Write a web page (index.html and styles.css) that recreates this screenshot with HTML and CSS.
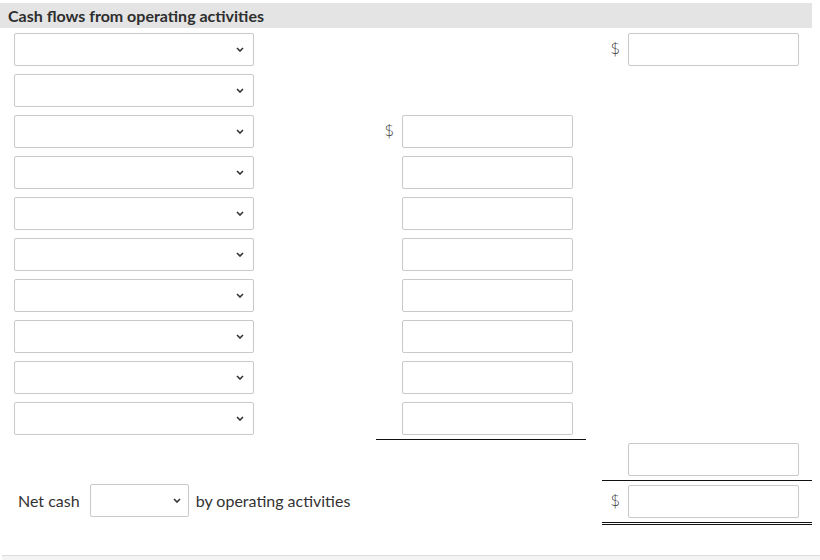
FILE: index.html
```html
<!DOCTYPE html>
<html>
<head>
<meta charset="utf-8">
<link rel="stylesheet" href="styles.css">
</head>
<body>
<div class="sheet">
  <div class="head">Cash flows from operating activities</div>
  <div class="rows">
    <div class="row">
      <div class="sel"><svg class="chev" width="8" height="5" viewBox="0 0 8 5"><path d="M1 1 L4 4 L7 1" fill="none" stroke="#333" stroke-width="1.6"/></svg></div>
      <div class="mid"></div>
      <div class="right"><span class="dol">$</span><div class="inp"></div></div>
    </div>
    <div class="row">
      <div class="sel"><svg class="chev" width="8" height="5" viewBox="0 0 8 5"><path d="M1 1 L4 4 L7 1" fill="none" stroke="#333" stroke-width="1.6"/></svg></div>
    </div>
    <div class="row">
      <div class="sel"><svg class="chev" width="8" height="5" viewBox="0 0 8 5"><path d="M1 1 L4 4 L7 1" fill="none" stroke="#333" stroke-width="1.6"/></svg></div>
      <div class="mid"><span class="dol">$</span><div class="inp"></div></div>
    </div>
    <div class="row">
      <div class="sel"><svg class="chev" width="8" height="5" viewBox="0 0 8 5"><path d="M1 1 L4 4 L7 1" fill="none" stroke="#333" stroke-width="1.6"/></svg></div>
      <div class="mid"><span class="dol"></span><div class="inp"></div></div>
    </div>
    <div class="row">
      <div class="sel"><svg class="chev" width="8" height="5" viewBox="0 0 8 5"><path d="M1 1 L4 4 L7 1" fill="none" stroke="#333" stroke-width="1.6"/></svg></div>
      <div class="mid"><span class="dol"></span><div class="inp"></div></div>
    </div>
    <div class="row">
      <div class="sel"><svg class="chev" width="8" height="5" viewBox="0 0 8 5"><path d="M1 1 L4 4 L7 1" fill="none" stroke="#333" stroke-width="1.6"/></svg></div>
      <div class="mid"><span class="dol"></span><div class="inp"></div></div>
    </div>
    <div class="row">
      <div class="sel"><svg class="chev" width="8" height="5" viewBox="0 0 8 5"><path d="M1 1 L4 4 L7 1" fill="none" stroke="#333" stroke-width="1.6"/></svg></div>
      <div class="mid"><span class="dol"></span><div class="inp"></div></div>
    </div>
    <div class="row">
      <div class="sel"><svg class="chev" width="8" height="5" viewBox="0 0 8 5"><path d="M1 1 L4 4 L7 1" fill="none" stroke="#333" stroke-width="1.6"/></svg></div>
      <div class="mid"><span class="dol"></span><div class="inp"></div></div>
    </div>
    <div class="row">
      <div class="sel"><svg class="chev" width="8" height="5" viewBox="0 0 8 5"><path d="M1 1 L4 4 L7 1" fill="none" stroke="#333" stroke-width="1.6"/></svg></div>
      <div class="mid"><span class="dol"></span><div class="inp"></div></div>
    </div>
    <div class="row row-last">
      <div class="sel"><svg class="chev" width="8" height="5" viewBox="0 0 8 5"><path d="M1 1 L4 4 L7 1" fill="none" stroke="#333" stroke-width="1.6"/></svg></div>
      <div class="mid underline"><span class="dol"></span><div class="inp"></div></div>
    </div>
    <div class="row row-sub">
      <div class="right underline"><span class="dol"></span><div class="inp"></div></div>
    </div>
    <div class="row row-net">
      <div class="netlabel">
        <span>Net cash</span>
        <div class="sel small"><svg class="chev" width="8" height="5" viewBox="0 0 8 5"><path d="M1 1 L4 4 L7 1" fill="none" stroke="#333" stroke-width="1.6"/></svg></div>
        <span>by operating activities</span>
      </div>
      <div class="right dbl"><span class="dol">$</span><div class="inp"></div></div>
    </div>
  </div>
  <div class="foot"></div>
</div>
</body>
</html>
```

FILE: styles.css
```css
html, body {
  margin: 0;
  padding: 0;
  background: #fff;
}
body {
  font-family: Lato, "Open Sans", sans-serif;
  color: #333;
  width: 820px;
  height: 560px;
  overflow: hidden;
}
.sheet {
  width: 812px;
  padding-top: 3px;
}
.head {
  height: 25px;
  background: #e4e4e4;
  font-weight: bold;
  font-size: 16px;
  line-height: 26px;
  padding-left: 8px;
  color: #2e2e2e;
}
.rows {
  display: flex;
  flex-direction: column;
  padding-top: 5px;
}
.row {
  display: grid;
  grid-template-columns: 14px 240px 122px 210px 16px 210px;
  height: 33px;
  margin-bottom: 8px;
}
.sel {
  grid-column: 2;
  box-sizing: border-box;
  height: 33px;
  border: 1px solid #c9c9c9;
  border-radius: 2px;
  background: #fff;
  display: flex;
  align-items: center;
  justify-content: flex-end;
  padding-right: 9px;
}
.mid {
  grid-column: 4;
  display: grid;
  grid-template-columns: 26px 171px 13px;
  align-items: start;
}
.right {
  grid-column: 6;
  display: grid;
  grid-template-columns: 26px 171px 13px;
  align-items: start;
}
.dol {
  font-family: "DejaVu Sans", sans-serif;
  font-weight: 200;
  font-size: 15px;
  color: #444;
  line-height: 33px;
  text-align: right;
  padding-right: 8px;
}
.inp {
  box-sizing: border-box;
  height: 33px;
  border: 1px solid #c9c9c9;
  border-radius: 2px;
  background: #fff;
}
.underline {
  padding-bottom: 4px;
  border-bottom: 1px solid #111;
}
.row-last {
  height: auto;
  margin-bottom: 3px;
}
.row-sub {
  height: auto;
  margin-bottom: 4px;
}
.row-net {
  height: auto;
  margin-bottom: 0;
}
.dbl {
  padding-bottom: 4px;
  border-bottom: 3px double #111;
}
.netlabel {
  grid-column: 1 / 4;
  display: flex;
  align-items: center;
  height: 33px;
  padding-left: 18px;
  margin-top: -1px;
  font-size: 16px;
  color: #333;
}
.sel.small {
  width: 99px;
  margin: 0 7px 0 10px;
  padding-right: 7px;
}
.foot {
  margin-top: 30px;
  margin-left: 2px;
  width: 818px;
  height: 5px;
  border-top: 1px solid #dcdcdc;
  background: #f4f4f4;
}
```
